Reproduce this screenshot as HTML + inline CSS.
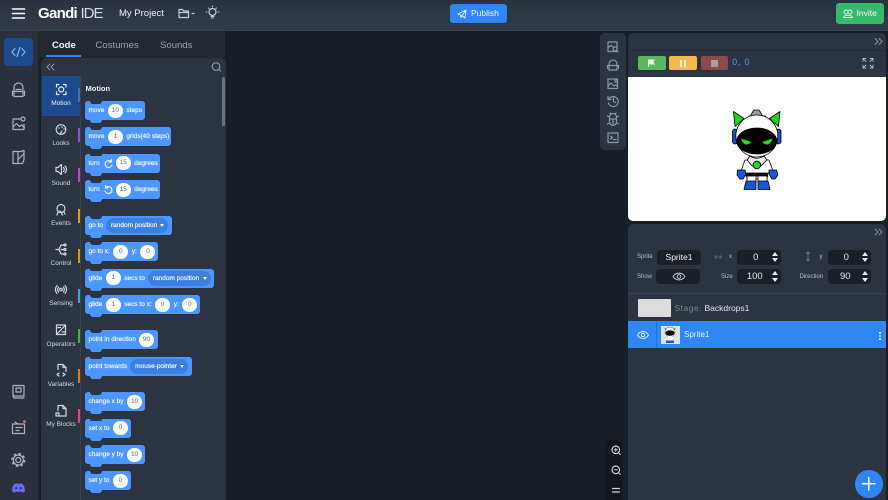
<!DOCTYPE html>
<html><head><meta charset="utf-8"><style>
*{box-sizing:border-box}
html,body{margin:0;padding:0;width:888px;height:500px;overflow:hidden;background:#181e27;font-family:"Liberation Sans",sans-serif;color:#fff}
.a,.b,.c,.i,.t,.s{position:absolute}
.t{white-space:nowrap}
svg{position:absolute;overflow:visible;fill:none;stroke:#a9b2bf;stroke-width:1.2;stroke-linecap:round;stroke-linejoin:round}
.b{left:85px;height:19px;background:#4c97ff;border-radius:3px;font-size:6.5px;font-weight:normal;-webkit-text-stroke:.2px #eef4ff;color:#eef4ff;display:flex;align-items:center;padding-left:3.5px;white-space:nowrap}
.b:before{content:"";position:absolute;left:5px;top:0;width:12px;height:2.5px;background:#2c3442;border-radius:0 0 5px 5px}
.b:after{content:"";position:absolute;left:5px;bottom:-3px;width:12px;height:3px;background:#4c97ff;border-radius:0 0 5px 5px}
.n{display:inline-block;flex:none;width:15px;background:#fff;color:#5a6675;-webkit-text-stroke:0;border-radius:7px;height:14px;line-height:14px;text-align:center;margin:0 3.5px}
.d{display:inline-flex;flex:none;align-items:center;justify-content:space-between;background:#3d7fe0;border-radius:8px;height:15px;padding:0 4px 0 5px;margin:0 3px}
.d i{display:inline-block;flex:none;border:2.5px solid transparent;border-top:3px solid #fff;border-bottom:0}
.c{left:42px;width:38px;text-align:center;font-size:6.5px;color:#d3d8df}
.bar{position:absolute;left:78px;width:2px;height:14px}
.fld{position:absolute;background:#1a1f28;border-radius:4px;height:15px;font-size:9.5px;color:#e8ebef;line-height:15px;text-align:center}
.lb{position:absolute;font-size:6px;color:#b8bfc9;white-space:nowrap}
.ar{position:absolute;right:3px;top:2px;width:0;height:0;border:3.5px solid transparent;border-bottom:4px solid #e8ebef;border-top:0}
.ar2{position:absolute;right:3px;top:8.500px;width:0;height:0;border:3.5px solid transparent;border-top:4px solid #e8ebef;border-bottom:0}
</style></head><body>

<!-- top bar -->
<div class="a" style="left:0;top:0;width:888px;height:31px;background:linear-gradient(#2a3240,#333b49);border-bottom:1px solid #3a424f"></div>
<svg style="left:0;top:0" width="40" height="31"><path d="M12.5 9H24.5M12.5 13.500H24.5M12.5 18H24.5" stroke="#fff" stroke-width="1.6"/></svg>
<div class="t" style="left:38px;top:4px;font-size:15px;font-weight:bold;line-height:20px;letter-spacing:-.7px">Gandi</div>
<div class="t" style="left:80.500px;top:4px;font-size:15px;line-height:20px;color:#d8dce2;letter-spacing:-1px">IDE</div>
<div class="t" style="left:119px;top:7px;font-size:9.500px;line-height:13px;color:#f0f2f5">My Project</div>
<svg style="left:0;top:0" width="230" height="31"><path d="M179 9.500h3.500l1.200 1.500h4.800v6.500h-9.500zM179 12.500h9.500" stroke="#c6ccd4"/><path d="M192 13.500h2" stroke="#c6ccd4"/><circle cx="212.500" cy="12" r="3.500" stroke="#c6ccd4"/><path d="M211 16.500h3M211.500 18h2M212.500 6v1M207 12h-1M219 12h-1M208.500 8l.7.7M216.500 8l-.7.7" stroke="#c6ccd4" stroke-width="1"/></svg>
<div class="a" style="left:450px;top:3.500px;width:57px;height:19.500px;background:#2f87f5;border-radius:3px"></div>
<svg style="left:458px;top:9px" width="10" height="10"><path d="M0 5L8 1L7 9L4 6.500L3 8.500L2.500 6ZM8 1L4 6.500" stroke="#e8f1ff" stroke-width=".9"/></svg>
<div class="t" style="left:471px;top:7px;font-size:8.500px;line-height:12px;color:#f2f7ff">Publish</div>
<div class="a" style="left:836px;top:2.500px;width:48px;height:21px;background:#36b96b;border-radius:3px"></div>
<svg style="left:843px;top:9px" width="10" height="10"><circle cx="3" cy="3" r="2" stroke="#d8f5e4" stroke-width=".9"/><circle cx="7" cy="3" r="2" stroke="#d8f5e4" stroke-width=".9"/><path d="M.5 8.500c0-3 9-3 9 0z" stroke="#d8f5e4" stroke-width=".9"/></svg>
<div class="t" style="left:856.500px;top:7px;font-size:8.500px;line-height:12px;color:#f2fff7">Invite</div>

<!-- left sidebar -->
<div class="a" style="left:0;top:31px;width:39px;height:469px;background:#2a313d;border-right:1px solid #20262f"></div>
<div class="a" style="left:39px;top:31px;width:186px;height:27px;background:#232933"></div>
<div class="a" style="left:4px;top:37.500px;width:28.500px;height:28.500px;background:#1c4a8d;border-radius:4px"></div>
<svg style="left:0;top:0" width="40" height="500">
<path d="M15 48.500l-3 3.500 3 3.500M22 48.500l3 3.500-3 3.500M20 47.500l-3 9" stroke="#7db5fb"/>
<path d="M14 87.500a4.500 4.500 0 0 1 9 0v9h-9zM12.500 91v4.500M24.500 91v4.500M14 91.500h9M16 89.500h5" stroke="#a9b2bf"/>
<path d="M13 119h8M13 119v10.500h11v-5M13 127l3.500-3.500 3 3 2-1.500 3 2.500" stroke="#a9b2bf"/><circle cx="23" cy="119" r="2" stroke="#a9b2bf"/>
<path d="M13 151.500h5v12h-5zM18 151.500h3l3-1v9l-1.500 4H18M18 159.500l6-6" stroke="#a9b2bf"/>
<path d="M13 385.500h11v10.500H14.500a1.500 1.500 0 0 1-1.500-1.500zM13 394.500c0 3.500 1 3.500 2 3.500h9M16 388h5v4h-5z" stroke="#a9b2bf"/>
<path d="M12.500 424h12v9.500h-12zM15 422l3 2M16 427.500h6M16 430.500h3" stroke="#a9b2bf"/>
<circle cx="18.300" cy="460" r="2.500" stroke="#a9b2bf"/><circle cx="18.300" cy="460" r="5" stroke="#a9b2bf"/><circle cx="18.300" cy="460" r="6.300" stroke="#a9b2bf" stroke-width="1.600" stroke-dasharray="2.500 2.450" stroke-linecap="butt"/>
</svg>
<div class="a" style="left:22.500px;top:419.500px;width:3.500px;height:3.500px;border-radius:50%;background:#f0565f"></div>
<svg style="left:12px;top:483px;stroke:none" width="13" height="10"><path d="M2 1.200C3.500.500 4.500.200 5 .200L5.300.800h2.400L8 .200c.500 0 1.500.300 3 1 1.300 2 2 4.500 2 7-1 .800-2 1.300-3 1.500L9.300 8.500C8 9 5 9 3.700 8.500L3 9.700C2 9.500 1 9 0 8.200c0-2.500.700-5 2-7z" fill="#6a6ff0" stroke="none"/><circle cx="4.300" cy="5.200" r="1.100" fill="#2a313d" stroke="none"/><circle cx="8.700" cy="5.200" r="1.100" fill="#2a313d" stroke="none"/></svg>

<!-- tabs -->
<div class="t" style="left:52px;top:39px;font-size:9.500px;font-weight:bold;line-height:13px;color:#f2f4f7">Code</div>
<div class="t" style="left:95.500px;top:39px;font-size:9.600px;line-height:13px;color:#9aa2ad">Costumes</div>
<div class="t" style="left:160px;top:39px;font-size:9.600px;line-height:13px;color:#9aa2ad">Sounds</div>
<div class="a" style="left:45.500px;top:55px;width:35px;height:2px;background:#2f87f5"></div>

<!-- palette -->
<div class="a" style="left:41px;top:58px;width:184.500px;height:442px;background:#2c3442;border-radius:5px 5px 0 0"></div>
<div class="a" style="left:80px;top:75px;width:1px;height:425px;background:#3a4250"></div>
<div class="a" style="left:42px;top:75.500px;width:38px;height:40px;background:#1c4a8d"></div>
<div class="a" style="left:222px;top:77px;width:3px;height:49px;background:#6b727d;border-radius:2px"></div>
<svg style="left:0;top:0" width="230" height="440">
<path d="M50 64l-3 3 3 3M54 64l-3 3 3 3" stroke="#8e96a2" stroke-width=".9"/>
<circle cx="216" cy="66.500" r="3.800" stroke="#8e96a2"/><path d="M219 69.500l1.500 1.500" stroke="#8e96a2"/>
<path d="M56.500 87v-2.500h2.500M63.500 84.500H66V87M66 92v2.500h-2.500M59 94.500h-2.500V92" stroke="#e8edf5"/><circle cx="61.200" cy="89.500" r="2.500" stroke="#e8edf5"/>
<circle cx="61" cy="129.500" r="4.800" stroke="#d3d8df"/><circle cx="59" cy="128" r=".8" fill="#d3d8df" stroke="none"/><circle cx="62" cy="127" r=".8" fill="#d3d8df" stroke="none"/><circle cx="64" cy="129" r=".8" fill="#d3d8df" stroke="none"/><path d="M60 134l2-3" stroke="#d3d8df"/>
<path d="M56 167.500h2l3.500-3v10l-3.500-3h-2zM63.500 167.500c1 1 1 3 0 4M65 166c2 2 2 5 0 7" stroke="#d3d8df"/>
<circle cx="61" cy="208.500" r="4" stroke="#d3d8df"/><path d="M60 211l2.500 4M58 212l-1 3M64 212l1 2" stroke="#d3d8df"/>
<path d="M56 249.500h3M61 245h3M61 249.500h3M61 254h3M59 249.500l2-4.500M59 249.500l2 4.500" stroke="#d3d8df"/><circle cx="65" cy="245" r="1" stroke="#d3d8df"/><circle cx="65" cy="249.500" r="1" stroke="#d3d8df"/><circle cx="65" cy="254" r="1" stroke="#d3d8df"/>
<circle cx="61" cy="289.500" r="1.300" stroke="#d3d8df"/><path d="M58.500 287c-1 1.500-1 3.500 0 5M63.500 287c1 1.500 1 3.500 0 5M57 285.500c-2 2.500-2 5.500 0 8M65 285.500c2 2.500 2 5.500 0 8" stroke="#d3d8df"/>
<path d="M56.500 325h9v9.500h-9zM57 334l8.500-9M58 327.500h2.500M62 332h2.500" stroke="#d3d8df"/>
<path d="M58 369.500v-5h5l3 3v4M66 367.500h-3v-3M59 373l-2 1.500 2 1.500M63 373l2 1.500-2 1.500" stroke="#d3d8df"/>
<path d="M58 410.500v-5h5l3 3v7.500h-6M66 408.500h-3v-3M56 413h3v3h-3z" stroke="#d3d8df"/>
</svg>
<div class="c" style="top:99.500px;color:#eef3fa">Motion</div>
<div class="c" style="top:139.500px">Looks</div>
<div class="c" style="top:179.500px">Sound</div>
<div class="c" style="top:220px">Events</div>
<div class="c" style="top:260px">Control</div>
<div class="c" style="top:300px">Sensing</div>
<div class="c" style="top:340.500px">Operators</div>
<div class="c" style="top:380.500px">Variables</div>
<div class="c" style="top:420.500px">My Blocks</div>
<div class="bar" style="top:88px;background:#3f74bd"></div>
<div class="bar" style="top:128px;background:#8a55d7"></div>
<div class="bar" style="top:168px;background:#b84cc0"></div>
<div class="bar" style="top:209px;background:#d9a514"></div>
<div class="bar" style="top:249px;background:#d9991a"></div>
<div class="bar" style="top:289px;background:#3aa5cf"></div>
<div class="bar" style="top:329px;background:#4cab4c"></div>
<div class="bar" style="top:369px;background:#e07a1a"></div>
<div class="bar" style="top:409px;background:#e6456d"></div>
<div class="t" style="left:85.500px;top:83.500px;font-size:7.500px;font-weight:bold;line-height:10px;color:#eef1f5">Motion</div>

<!-- blocks -->
<div class="b" style="top:101px;width:60px">move<span class="n">10</span>steps</div>
<div class="b" style="top:127px;width:86px">move<span class="n">1</span>grids(40 steps)</div>
<div class="b" style="top:153.500px;width:75px">turn<svg style="left:19px;top:5px" width="9" height="9"><path d="M7.500 3a3.500 3.500 0 1 0 .5 3M7.500.500V3H5" stroke="#e4eeff"/></svg><span class="n" style="margin-left:16px">15</span>degrees</div>
<div class="b" style="top:180px;width:75px">turn<svg style="left:19px;top:5px" width="9" height="9"><path d="M1.500 3a3.500 3.500 0 1 1-.5 3M1.500.500V3H4" stroke="#e4eeff"/></svg><span class="n" style="margin-left:16px">15</span>degrees</div>
<div class="b" style="top:216px;width:87px">go to<span class="d" style="width:62px">random position<i></i></span></div>
<div class="b" style="top:242px;width:73px">go to x:<span class="n">0</span>y:<span class="n">0</span></div>
<div class="b" style="top:268.500px;width:129px">glide<span class="n">1</span>secs to<span class="d" style="width:63px">random position<i></i></span></div>
<div class="b" style="top:295px;width:115px">glide<span class="n">1</span>secs to x:<span class="n">0</span>y:<span class="n">0</span></div>
<div class="b" style="top:330px;width:73px">point in direction<span class="n" style="margin-left:3px">90</span></div>
<div class="b" style="top:356.500px;width:107px">point towards<span class="d" style="width:58px">mouse-pointer<i></i></span></div>
<div class="b" style="top:392px;width:60px">change x by<span class="n">10</span></div>
<div class="b" style="top:418.500px;width:46px">set x to<span class="n">0</span></div>
<div class="b" style="top:445px;width:60px">change y by<span class="n">10</span></div>
<div class="b" style="top:471px;width:46px">set y to<span class="n">0</span></div>

<!-- side toolbar -->
<div class="a" style="left:600px;top:33px;width:25.500px;height:117px;background:#2c3442;border-radius:5px"></div>
<svg style="left:600px;top:33px" width="26" height="117">
<path d="M8 9h9v9.500H8zM8 14.500l3-2 3 2M18 19l-1.500-1.500" stroke="#8e96a2"/><circle cx="15" cy="16" r="2" stroke="#8e96a2"/>
<path d="M9 31a4 4 0 0 1 8 0v6H9zM7.500 32.500h11M7.500 32.500v3M18.500 32.500v3" stroke="#8e96a2"/>
<path d="M8 46h9.500v9.500H8zM8 53l3-3 3 3 2-1 1.500 1.500" stroke="#8e96a2"/><circle cx="16" cy="48" r="1.200" stroke="#8e96a2"/>
<path d="M9 66a5 5 0 1 1-.5 4M8 63.500V66.500h3M13.500 65v3.500l2 1" stroke="#8e96a2"/>
<path d="M9.500 84a3.500 3.500 0 0 1 7 0v5a3.500 3.500 0 0 1-7 0zM9.500 86h7M13 86v6M7.500 83l2 1M18.500 83l-2 1M7.500 91l2-1M18.500 91l-2-1M10 80l1 1.500M16 80l-1 1.500" stroke="#8e96a2"/>
<path d="M8 100h10v9.500H8zM10.500 103l2 1.500-2 1.500M13.500 106.500h2.500" stroke="#8e96a2"/>
</svg>

<!-- zoom controls -->
<div class="a" style="left:606px;top:440px;width:16px;height:60px;background:#13171d;border-radius:4px 4px 0 0"></div>
<svg style="left:606px;top:440px" width="20" height="60">
<circle cx="9.800" cy="9.800" r="3.800" stroke="#d0d4da"/><path d="M8.300 9.800h3M9.800 8.300v3M12.800 13l1.500 1.500" stroke="#d0d4da" stroke-width="1"/>
<circle cx="9.800" cy="29.800" r="3.800" stroke="#d0d4da"/><path d="M8.300 29.800h3M12.800 33l1.500 1.500" stroke="#d0d4da" stroke-width="1"/>
<path d="M6.500 48.500h7M6.500 52h7" stroke="#d0d4da"/>
</svg>

<!-- stage panel -->
<div class="a" style="left:628px;top:33px;width:257.500px;height:188px;background:#2c3442;border-radius:5px"></div>
<div class="a" style="left:628px;top:49.500px;width:257.500px;height:1px;background:#252c37"></div>
<svg style="left:628px;top:33px" width="258" height="60">
<path d="M247 5.500l3 3-3 3M251 5.500l3 3-3 3" stroke="#8e96a2" stroke-width=".9"/>
<path d="M235 25.500h3M235 25.500v3M235.500 26l2.500 2.500M245 25.500h-3M245 25.500v3M244.500 26l-2.500 2.500M235 35h3M235 35v-3M235.500 34.500l2.500-2.500M245 35h-3M245 35v-3M244.500 34.500l-2.500-2.500" stroke="#d0d4da" stroke-width=".8"/>
</svg>
<div class="a" style="left:637.500px;top:56px;width:28px;height:14px;background:#5cb85c;border-radius:2px"></div>
<svg style="left:647px;top:59px;stroke:none" width="9" height="8"><path d="M1 .500h7l-1.500 2.500 1.500 2.500H2v2.500H1z" fill="#eefbee" stroke="none"/></svg>
<div class="a" style="left:669px;top:56px;width:28px;height:14px;background:#f4b84f;border-radius:2px"></div>
<div class="a" style="left:680px;top:60px;width:2px;height:7px;background:#fff2d8"></div>
<div class="a" style="left:684px;top:60px;width:2px;height:7px;background:#fff2d8"></div>
<div class="a" style="left:700.500px;top:56px;width:27.500px;height:14px;background:#8b4a4e;border-radius:2px"></div>
<div class="a" style="left:711px;top:60px;width:7px;height:7px;background:#a5a0a2"></div>
<div class="t" style="left:732px;top:58px;font-family:'DejaVu Sans','Liberation Sans',sans-serif;font-size:8.500px;line-height:11px;color:#3f96e8;letter-spacing:.5px">0, 0</div>
<div class="a" style="left:628px;top:77px;width:257.500px;height:144px;background:#fff;border-radius:0 0 5px 5px"></div>

<!-- robot -->
<svg style="left:0;top:0" width="888" height="200">
<g stroke="#000" stroke-width=".8">
<path d="M733.500 111.500l1.500 15 9-8z" fill="#1fd61f"/><path d="M780 111.500l-1.500 15-9-8z" fill="#1fd61f"/>
<path d="M749 119l3-6 2-3h5l2 3 3 6z" fill="#9a9a9a"/>
<path d="M746 119h22l-3-3h-16z" fill="#c9c9c9"/>
<rect x="732.500" y="129" width="5" height="15" rx="2.500" fill="#1a55b8"/><rect x="776" y="129" width="5" height="15" rx="2.500" fill="#1a55b8"/>
<path d="M745 160l-4 11 5 2 1 6h20l1-6 5-2-4-11z" fill="#fff"/>
<circle cx="756.800" cy="136" r="21" fill="#fff"/>
<ellipse cx="756.800" cy="141" rx="20" ry="13" fill="#000"/>
<path d="M750 156c5 3 9 3 14 0l3 4-6 6h-9l-5-6z" fill="#e8e8e8"/>
<circle cx="756.800" cy="165" r="3.800" fill="#1fd61f"/>
<path d="M737.500 170h7.500l1 4-3 5h-3l-3-4z" fill="#1a55d8"/><path d="M769 170h7.500l1.500 5-3 4h-3l-3-5z" fill="#1a55d8"/>
<path d="M746 173h21v3h-21z" fill="#111"/>
<path d="M747 176h9v6h-9z" fill="#fff"/><path d="M758 176h9v6h-9z" fill="#fff"/>
<path d="M744 189.500l2-8.500h10v8.500z" fill="#1a55d8"/><path d="M758 189.500v-8.500h10l2 8.500z" fill="#1a55d8"/>
</g>
<path d="M741 138.500l10.500 3.500q-3 3-6 2.500q-3-1.500-4.500-6zM772.600 138.500l-10.500 3.500q3 3 6 2.500q3-1.500 4.500-6z" fill="#1fe01f" stroke="none"/>
</svg>

<!-- sprite panel -->
<div class="a" style="left:628px;top:224px;width:257.500px;height:276px;background:#2c3442;border-radius:5px 5px 0 0"></div>
<div class="a" style="left:628px;top:293px;width:257.500px;height:1px;background:#3a4250"></div>
<svg style="left:628px;top:224px" width="258" height="110">
<path d="M247 5l3 3-3 3M251 5l3 3-3 3" stroke="#8e96a2" stroke-width=".9"/>
<path d="M86.500 33h7M86.500 33l1.500-1.500M86.500 33l1.500 1.500M93.500 33l-1.500-1.500M93.500 33l-1.500 1.500" stroke="#5a626e" stroke-width=".9"/>
<path d="M180 28v9M180 28l-1.500 1.500M180 28l1.500 1.500M180 37l-1.500-1.500M180 37l1.500-1.500" stroke="#6e7682" stroke-width=".9"/>
</svg>
<div class="lb" style="left:637px;top:254px">Sprite</div>
<div class="fld" style="left:657px;top:249.500px;width:44px;color:#f0f2f5;font-size:8.500px">Sprite1</div>
<div class="lb" style="left:729px;top:254px">x</div>
<div class="fld" style="left:737px;top:249.500px;width:43.500px;padding-right:14px;padding-left:8px">0<div class="ar"></div><div class="ar2"></div></div>
<div class="lb" style="left:819.500px;top:254px">y</div>
<div class="fld" style="left:827.500px;top:249.500px;width:43.500px;padding-right:14px;padding-left:8px">0<div class="ar"></div><div class="ar2"></div></div>
<div class="lb" style="left:637px;top:274px">Show</div>
<div class="fld" style="left:656px;top:269px;width:44px"></div>
<svg style="left:672px;top:272px" width="14" height="10"><path d="M1 4.500c3-4.500 9-4.500 12 0-3 4.500-9 4.500-12 0z" stroke="#cfd4da" stroke-width=".9"/><circle cx="7" cy="4.500" r="1.800" stroke="#cfd4da" stroke-width=".9"/></svg>
<div class="lb" style="left:721px;top:274px">Size</div>
<div class="fld" style="left:737px;top:269px;width:43.500px;padding-right:14px;padding-left:6px">100<div class="ar"></div><div class="ar2"></div></div>
<div class="lb" style="left:799.500px;top:274px">Direction</div>
<div class="fld" style="left:827.500px;top:269px;width:43.500px;padding-right:14px;padding-left:6px">90<div class="ar"></div><div class="ar2"></div></div>

<div class="a" style="left:637.500px;top:298.500px;width:33px;height:18.500px;background:#dcdcdc;border-radius:1px"></div>
<div class="t" style="left:674.500px;top:302px;font-size:8.500px;line-height:12px;color:#7f8792;letter-spacing:.5px">Stage:</div>
<div class="t" style="left:704.500px;top:302px;font-size:8.500px;line-height:12px;color:#e4e7eb">Backdrops1</div>

<div class="a" style="left:628px;top:321px;width:257.500px;height:27px;background:#2f87f5"></div>
<div class="a" style="left:655.500px;top:321px;width:1px;height:27px;background:#2a6fca"></div>
<svg style="left:637px;top:330px" width="12" height="10"><path d="M.5 5c2.500-4.500 8.500-4.500 11 0-2.500 4.500-8.500 4.500-11 0z" stroke="#e6f0ff" stroke-width=".9"/><circle cx="6" cy="5" r="1.700" stroke="#e6f0ff" stroke-width=".9"/></svg>
<div class="a" style="left:661px;top:326px;width:18.500px;height:18px;background:#dfe3e8"></div>
<svg style="left:661px;top:326px;stroke:none" width="19" height="18"><circle cx="9" cy="6" r="5" fill="#fff" stroke="#444" stroke-width=".5"/><ellipse cx="9" cy="7" rx="4.500" ry="2.800" fill="#000" stroke="none"/><path d="M3 1.500l1.500 3 1.500-1.500zM15 1.500l-1.500 3-1.500-1.500z" fill="#28c028" stroke="none"/><rect x="6" y="10.500" width="6" height="4" fill="#f4f4f4" stroke="none"/><rect x="5" y="14.500" width="8" height="2.500" fill="#2458b8" stroke="none"/></svg>
<div class="t" style="left:684px;top:329px;font-size:8px;line-height:12px;color:#e8f1ff">Sprite1</div>
<div class="a" style="left:879px;top:331.500px;width:2px;height:2px;background:#e8f1ff;border-radius:50%"></div>
<div class="a" style="left:879px;top:334.500px;width:2px;height:2px;background:#e8f1ff;border-radius:50%"></div>
<div class="a" style="left:879px;top:337.500px;width:2px;height:2px;background:#e8f1ff;border-radius:50%"></div>

<div class="a" style="left:855px;top:470px;width:27.500px;height:27.500px;border-radius:50%;background:#2f87f5"></div>
<svg style="left:855px;top:470px" width="28" height="28"><path d="M7.500 13.800h12.500M13.800 7.500V20" stroke="#fff" stroke-width="1.500"/></svg>
</body></html>
